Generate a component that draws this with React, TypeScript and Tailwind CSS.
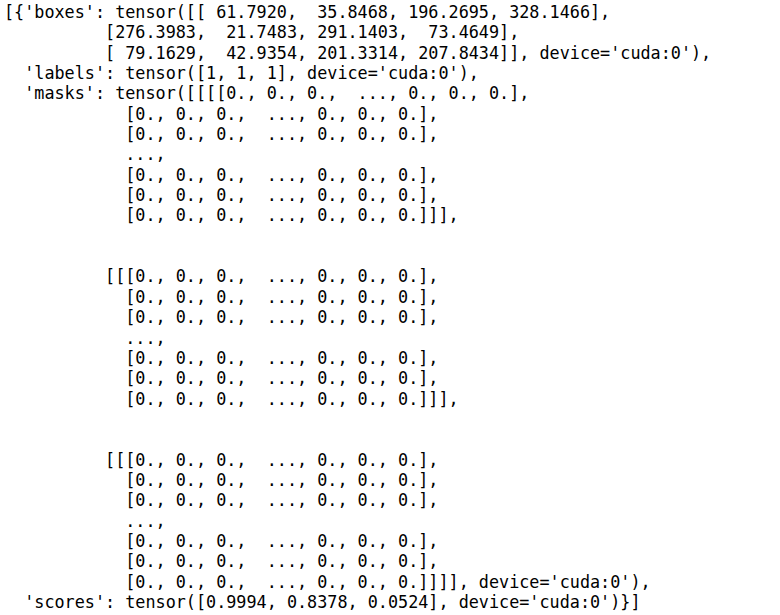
const lines: string[] = [
  "[{'boxes': tensor([[ 61.7920,  35.8468, 196.2695, 328.1466],",
  "          [276.3983,  21.7483, 291.1403,  73.4649],",
  "          [ 79.1629,  42.9354, 201.3314, 207.8434]], device='cuda:0'),",
  "  'labels': tensor([1, 1, 1], device='cuda:0'),",
  "  'masks': tensor([[[[0., 0., 0.,  ..., 0., 0., 0.],",
  "            [0., 0., 0.,  ..., 0., 0., 0.],",
  "            [0., 0., 0.,  ..., 0., 0., 0.],",
  "            ...,",
  "            [0., 0., 0.,  ..., 0., 0., 0.],",
  "            [0., 0., 0.,  ..., 0., 0., 0.],",
  "            [0., 0., 0.,  ..., 0., 0., 0.]]],",
  "",
  "",
  "          [[[0., 0., 0.,  ..., 0., 0., 0.],",
  "            [0., 0., 0.,  ..., 0., 0., 0.],",
  "            [0., 0., 0.,  ..., 0., 0., 0.],",
  "            ...,",
  "            [0., 0., 0.,  ..., 0., 0., 0.],",
  "            [0., 0., 0.,  ..., 0., 0., 0.],",
  "            [0., 0., 0.,  ..., 0., 0., 0.]]],",
  "",
  "",
  "          [[[0., 0., 0.,  ..., 0., 0., 0.],",
  "            [0., 0., 0.,  ..., 0., 0., 0.],",
  "            [0., 0., 0.,  ..., 0., 0., 0.],",
  "            ...,",
  "            [0., 0., 0.,  ..., 0., 0., 0.],",
  "            [0., 0., 0.,  ..., 0., 0., 0.],",
  "            [0., 0., 0.,  ..., 0., 0., 0.]]]], device='cuda:0'),",
  "  'scores': tensor([0.9994, 0.8378, 0.0524], device='cuda:0')}]",
];

export default function App() {
  return (
    <div className="h-[615px] w-[780px] overflow-hidden bg-white">
      {/* notebook cell output */}
      <pre className="m-0 whitespace-pre pl-[4px] pt-[2px] font-['DejaVu_Sans_Mono',monospace] text-[16.8px] leading-[20.35px] text-black">
        {lines.join("\n")}
      </pre>
    </div>
  );
}
